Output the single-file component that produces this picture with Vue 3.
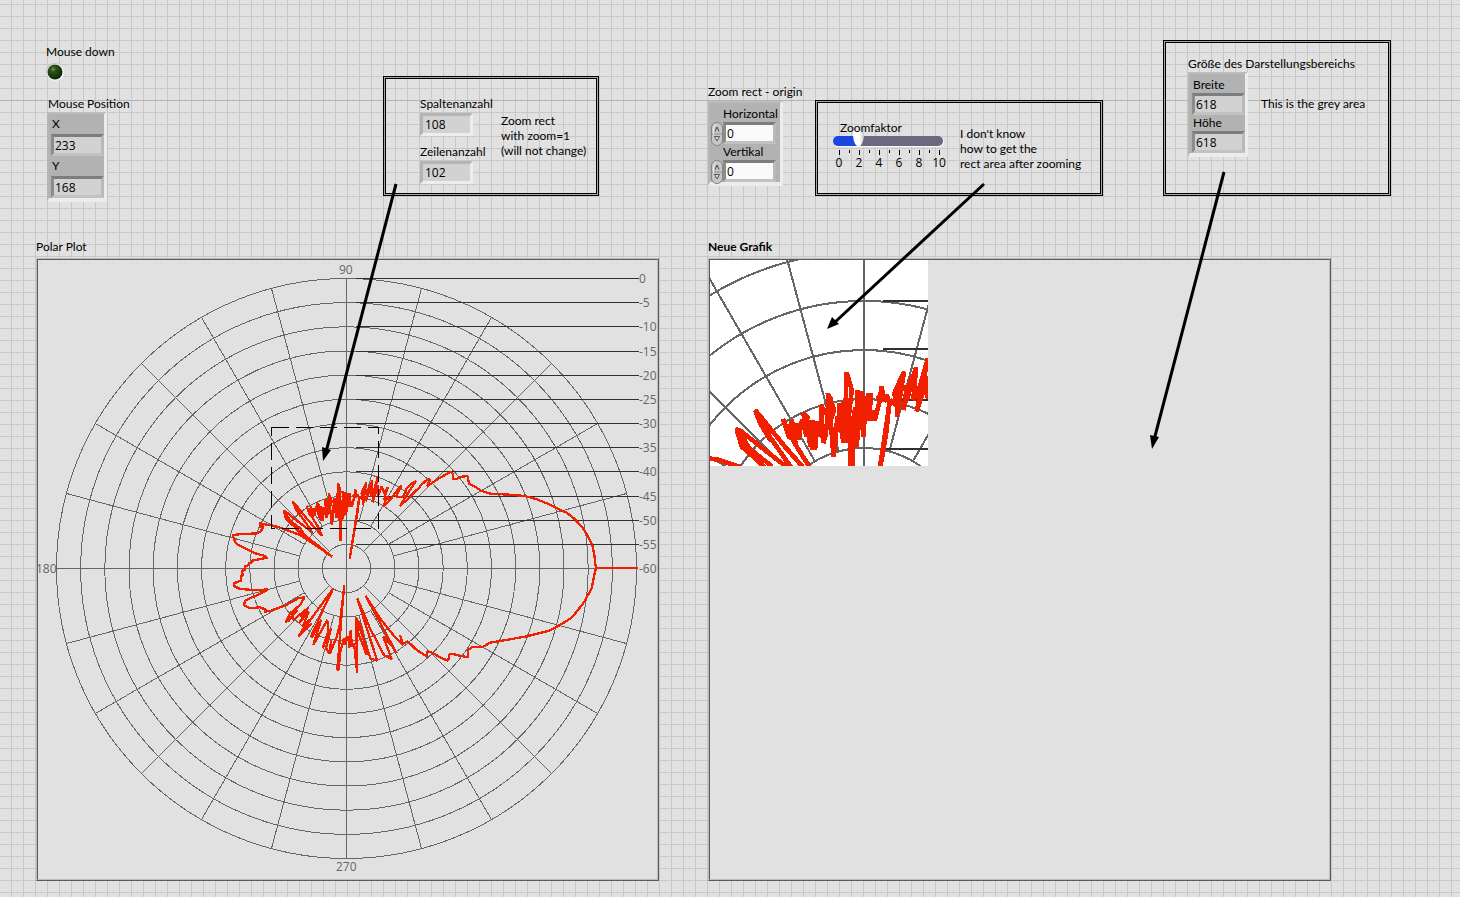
<script setup>
const CX = 346.5
const CY = 568.5
const RADIUS = 290
const rings = Array.from({ length: 12 }, (_, i) => (RADIUS * (i + 1)) / 12)
const levels = Array.from({ length: 13 }, (_, i) => ({
  label: i === 0 ? '0' : String(-5 * i),
  y: Math.round(CY - 0.5 - RADIUS + (RADIUS * i) / 12) + 0.5
}))
const spokes = Array.from({ length: 24 }, (_, i) => i)
  .filter((i) => i % 6 !== 0)
  .map((i) => {
    const a = (i * Math.PI) / 12
    const inner = i % 3 === 0 ? RADIUS / 12 : RADIUS / 6
    return {
      x1: CX + inner * Math.cos(a),
      y1: CY - inner * Math.sin(a),
      x2: CX + RADIUS * Math.cos(a),
      y2: CY - RADIUS * Math.sin(a)
    }
  })

// Measured lobe, stored in sections that each have their own origin and resolution.
const sections = [
  { x: 400, y: 450, k: 3, p: '714 354 588 354 586 340 583 315 577 285 562 255 545 230 525 208 500 188 475 177 440 160 410 148 375 138 330 134 272 131 243 122 222 108 207 102 203 78 185 80 170 86 158 86 158 70 152 66 140 72 115 86 92 102 82 108 90 86 78 92 60 108' },
  { x: 220, y: 410, k: 3, p: '600 230 580 250 560 270 540 288 560 255 588 213 572 222 560 235 548 262 528 260 545 226 532 240 512 268 490 290 500 262 515 265 492 270 503 232 492 250 485 228 478 250' },
  { x: 265.77, y: 412.72, k: 6.09, p: '684 505 676 480 684 440 650 545 684 385 660 470 640 510 648 412 618 515 645 430 622 505 635 440 610 540 622 470 600 480 590 560 612 425 605 440 583 490 592 530 570 510 566 540 541 705 511 889 560 600 568 520 560 495 550 515 545 468 538 515 550 490 532 505 540 510 524 572 520 540 514 572 518 545 509 572 512 490 506 572 504 490 500 570 496 500 496 530 490 620 488 500 483 485 480 600 478 540 472 480 474 630 466 530 470 650 462 540 458 705 456 783 446 560 455 480 440 427 437 520 433 640 440 520 438 638 444 530 427 520 430 638 424 600 422 530 418 520 416 600 412 560 406 640 400 680 392 570 403 540 383 490 388 590 392 500 374 630 384 560 362 525 370 640 376 590 358 620 352 575 345 660 342 580 338 660 338 570 332 650 330 570 328 640 325 590 316 600 310 550 322 560 318 615 320 620 306 570 300 595 296 630 288 580 283 595 286 620 275 570 270 610 288 640 262 585 282 615 268 625 248 567 262 600 290 650 325 705 342 750 255 650 165 540 180 580 212 632 202 600 185 585 230 650 268 705 284 730 200 665 115 598 140 650 210 705 258 775 170 690 125 650 110 600' },
  { x: 220, y: 410, k: 3, p: '193 302 215 340 240 370 262 388 240 362 270 388 337 440 240 375 200 360 165 348 140 344 118 340 130 345 118 348 130 352 122 364 110 370 60 373 38 375 47 400 80 418 105 430 128 436 142 443 118 448 98 451 96 458 88 458 85 466 76 468 75 480 66 482 68 496 62 500 64 512' },
  { x: 220, y: 560, k: 3, p: '62 62 42 70 42 78 60 87 110 91 145 88 110 106 75 122 72 136 90 145 120 142 140 150 132 156 152 152 195 137 235 115 254 112 240 135 210 160 197 188 232 150 205 184 220 160 220 180 267 142 240 170 262 150 237 190 266 155 248 200 268 178 235 230 275 190 235 230 340 85 318 130 272 232 304 180 276 232 300 190 280 255 322 180 325 215 308 265 333 205 318 265 328 280 334 240 330 280 350 230 360 190 373 75 366 150 352 330 356 330 360 280 372 235 376 255 378 232 385 232 388 265 386 240 390 262 392 210 396 260 402 250 412 340 408 170 415 220 440 285 422 195 408 175 452 296 472 302 450 235 412 115 450 205 492 285 515 298 490 230 520 262 530 280 500 225 437 108 480 175 520 225 550 255 540 225 548 252 562 245 600 278' },
  { x: 400, y: 450, k: 3, p: '20 572 50 600 82 620 82 603 100 610 125 625 145 632 148 612 160 612 182 618 205 622 205 600 215 592 250 590 270 578 300 573 375 560 445 543 480 525 515 503 550 460 575 415 583 375 588 354' }
]
const trace = sections
  .map(({ x, y, k, p }) => {
    const n = p.split(' ').map(Number)
    const out = []
    for (let i = 0; i < n.length; i += 2) {
      out.push((x + n[i] / k).toFixed(1) + ',' + (y + n[i + 1] / k).toFixed(1))
    }
    return out.join(' ')
  })
  .join(' ')

const ticks = Array.from({ length: 11 }, (_, i) => i)
</script>

<template>
  <main class="front-panel">
    <header class="controls">
      <section class="mouse">
        <div class="caption">Mouse down</div>
        <svg class="led" width="18" height="18" viewBox="1 1 18 18" role="img" aria-label="Mouse down">
          <defs>
            <radialGradient id="led" cx=".38" cy=".32" r=".7">
              <stop offset="0" stop-color="#6d9a5c" />
              <stop offset=".25" stop-color="#2c5516" />
              <stop offset="1" stop-color="#0c2404" />
            </radialGradient>
          </defs>
          <circle cx="9.5" cy="9.5" r="8.5" fill="#c4c4c4" />
          <circle cx="10.5" cy="10.5" r="8.5" fill="#f6f6f6" />
          <circle cx="10" cy="10" r="7.5" fill="url(#led)" />
        </svg>
        <div class="caption mouse-title">Mouse Position</div>
        <div class="cluster tall">
          <label for="mx">X</label>
          <input id="mx" class="num" value="233" readonly />
          <label for="my">Y</label>
          <input id="my" class="num" value="168" readonly />
        </div>
      </section>

      <section class="frame rect-frame">
        <div>
          <label class="caption" for="cols">Spaltenanzahl</label>
          <input id="cols" class="num loose" value="108" readonly />
          <label class="caption" for="rows">Zeilenanzahl</label>
          <input id="rows" class="num loose" value="102" readonly />
        </div>
        <p class="note">Zoom rect<br />with zoom=1<br />(will not change)</p>
      </section>

      <section class="origin">
        <div class="caption">Zoom rect - origin</div>
        <div class="cluster spin">
          <label for="h">Horizontal</label>
          <div class="spin-row">
            <button class="spinner" aria-label="Horizontal">
              <svg width="12" height="24" viewBox="0 0 12 24">
                <rect x=".5" y=".5" width="11" height="23" rx="5.5" fill="#c6c6c6" stroke="#858585" />
                <path d="M1 12h10" stroke="#8f8f8f" />
                <path d="M2.500 13V7Q2.500 3 5 2" fill="none" stroke="#eee" />
                <path d="M4 9.500L6 5L8 9.500" fill="none" stroke="#444" />
                <path d="M3.500 14.500H8.500L6 19Z" fill="#ddd" stroke="#555" />
              </svg>
            </button>
            <input id="h" class="num white" value="0" />
          </div>
          <label for="v">Vertikal</label>
          <div class="spin-row">
            <button class="spinner" aria-label="Vertikal">
              <svg width="12" height="24" viewBox="0 0 12 24">
                <rect x=".5" y=".5" width="11" height="23" rx="5.5" fill="#c6c6c6" stroke="#858585" />
                <path d="M1 12h10" stroke="#8f8f8f" />
                <path d="M2.500 13V7Q2.500 3 5 2" fill="none" stroke="#eee" />
                <path d="M4 9.500L6 5L8 9.500" fill="none" stroke="#444" />
                <path d="M3.500 14.500H8.500L6 19Z" fill="#ddd" stroke="#555" />
              </svg>
            </button>
            <input id="v" class="num white" value="0" />
          </div>
        </div>
      </section>

      <section class="frame factor-frame">
        <div class="factor">
          <label class="caption" for="zoom">Zoomfaktor</label>
          <input id="zoom" class="slider" type="range" min="0" max="10" value="2" />
          <div class="scale">
            <span v-for="t in ticks" :key="t" :class="{ minor: t % 2 }"><i></i><b v-if="t % 2 === 0">{{ t }}</b></span>
          </div>
        </div>
        <p class="note">I don't know<br />how to get the<br />rect area after zooming</p>
      </section>

      <section class="frame size-frame">
        <div>
          <div class="caption">Größe des Darstellungsbereichs</div>
          <div class="size-row">
            <div class="cluster size">
              <label for="w">Breite</label>
              <input id="w" class="num" value="618" readonly />
              <label for="ht">Höhe</label>
              <input id="ht" class="num" value="618" readonly />
            </div>
            <p class="note">This is the grey area</p>
          </div>
        </div>
      </section>
    </header>

    <div class="plots">
      <section>
        <h2 class="caption">Polar Plot</h2>
        <div class="screen">
          <svg viewBox="38 260 619 619">
            <defs>
              <g id="polar" fill="none">
                <g stroke="#666" stroke-width="1" shape-rendering="crispEdges">
                  <circle v-for="r in rings" :key="r" :cx="CX" :cy="CY" :r="r" />
                  <line v-for="(s, i) in spokes" :key="i" v-bind="s" />
                  <path d="M56 568.5H637M346.5 278V859" />
                </g>
                <path v-for="l in levels.slice(0, 12)" :key="l.y" :d="`M356 ${l.y}H639`" stroke="#303030" shape-rendering="crispEdges" />
                <polyline :points="trace" stroke="#f02000" stroke-width="2.3" stroke-linejoin="bevel" shape-rendering="crispEdges" />
              </g>
            </defs>
            <use href="#polar" />
            <g class="scale-text">
              <text v-for="l in levels" :key="l.y" x="639" :y="l.y + 4">{{ l.label }}</text>
              <text x="339" y="274">90</text>
              <text x="36" y="573">180</text>
              <text x="336" y="871">270</text>
            </g>
            <rect x="271.5" y="427.5" width="107" height="101" fill="none" stroke="#000" stroke-dasharray="17 7" shape-rendering="crispEdges" />
          </svg>
        </div>
      </section>
      <section>
        <h2 class="caption strong">Neue Grafik</h2>
        <div class="screen">
          <svg viewBox="710 260 619 619">
            <rect x="710" y="260" width="218" height="206" fill="#fff" />
            <svg x="710" y="260" width="218" height="206" viewBox="270.6 427.5 107.5 101.5" preserveAspectRatio="none">
              <use href="#polar" />
            </svg>
          </svg>
        </div>
      </section>
    </div>

    <svg class="arrows" viewBox="0 0 1460 897" aria-hidden="true">
      <g stroke="#000" stroke-width="3" fill="none">
        <path d="M396 184L326 452" />
        <path d="M984 184L834 323" />
        <path d="M1224 172L1154 440" />
      </g>
      <path d="M323 461L322 447L331 450Z" />
      <path d="M827 329L832 317L839 324Z" />
      <path d="M1152 449L1150 435L1159 437Z" />
    </svg>
  </main>
</template>

<style>
body {
  margin: 0;
  background: #e1e1e1;
}
</style>

<style scoped>
* {
  box-sizing: border-box;
}
.front-panel {
  position: relative;
  padding: 40px 69px 16px 36px;
  font: 12px/15px Lato, "Open Sans", "Noto Sans", sans-serif;
  color: #000;
  background:
    linear-gradient(#b4b4b4, #b4b4b4) 0 100px / 100% 1px no-repeat,
    linear-gradient(90deg, #c8c8c8 1px, transparent 1px) 11px 0 / 12px 12px,
    linear-gradient(#c8c8c8 1px, #e1e1e1 1px) 0 4px / 12px 12px;
}
.controls {
  display: flex;
  align-items: flex-start;
  height: 199px;
}
.caption {
  display: block;
  margin: 0;
  font-size: 12px;
  font-weight: 400;
  line-height: 16px;
  white-space: nowrap;
}
.strong {
  font-weight: 700;
}
.mouse {
  width: 347px;
  padding: 4px 0 0 10px;
}
.led {
  display: block;
  margin-top: 3px;
}
.mouse-title {
  margin: 15px 0 0 2px;
}
.cluster {
  display: flex;
  flex-direction: column;
  width: 60px;
  padding: 0 2px 0 2px;
  background: #b2b2b2;
  border: solid;
  border-width: 2px 3px 4px 2px;
  border-color: #bcbcbc #ececec #ececec #b6b6b6;
}
.cluster label {
  height: 16px;
  padding-left: 1px;
  line-height: 16px;
}
.mouse .cluster {
  margin-left: 1px;
}
.tall label {
  height: 20px;
  line-height: 20px;
}
.size {
  padding-top: 3px;
}
.num {
  display: block;
  width: 53px;
  height: 22px;
  padding: 0 0 0 1px;
  font: 12px/16px "Open Sans", "Noto Sans", sans-serif;
  color: #000;
  background: #d2d2d2;
  border: 3px solid;
  border-color: #7d7d7d #b9b9b9 #c2c2c2 #8c8c8c;
  border-radius: 0;
  outline: none;
}
.loose {
  height: 23px;
  padding-left: 2px;
  border-color: #b6b6b6 #ededed #ededed #b4b4b4;
}
.frame {
  display: flex;
  border: 1px solid #000;
  box-shadow: inset 0 0 0 1px #a8a8a8, inset 0 0 0 2px #000;
}
.rect-frame {
  width: 216px;
  height: 120px;
  margin-top: 36px;
  padding: 19px 0 0 36px;
}
.rect-frame > div {
  width: 81px;
}
.rect-frame .caption + .num {
  margin: 1px 0 8px;
}
.note {
  margin: 0;
  white-space: nowrap;
}
.rect-frame .note {
  padding-top: 17px;
}
.origin {
  width: 107px;
  margin: 44px 0 0 109px;
}
.spin {
  width: 75px;
  margin-top: 1px;
  padding: 3px 2px 0 1px;
}
.spin label {
  padding-left: 12px;
}
.spin-row {
  display: flex;
}
.spinner {
  width: 12px;
  height: 22px;
  padding: 0;
  background: none;
  border: 0;
}
.spinner svg {
  display: block;
}
.white {
  background: #fafafa;
}
.factor-frame {
  width: 288px;
  height: 96px;
  margin-top: 60px;
  padding: 19px 0 0 17px;
}
.factor {
  width: 127px;
}
.factor .caption {
  position: relative;
  z-index: 1;
  padding-left: 7px;
}
.slider {
  display: block;
  width: 110px;
  height: 10px;
  margin: 0;
  appearance: none;
  background: linear-gradient(90deg, #1b46e2 25px, #6b6880 25px);
  border-radius: 5px;
  box-shadow: 1px 1px 0 #f6f6f6;
}
.slider::-webkit-slider-thumb {
  appearance: none;
  width: 11px;
  height: 16px;
  margin-top: -6px;
  background: linear-gradient(90deg, #fff 60%, #c8c8c8);
  border-radius: 3px 3px 5px 5px / 3px 3px 12px 12px;
}
.scale {
  display: flex;
  width: 111px;
  padding: 4px 0 0 1px;
  font-family: "Open Sans", "Noto Sans", sans-serif;
}
.scale span {
  display: flex;
  flex: 1 1 0;
  flex-direction: column;
  align-items: center;
  min-width: 0;
}
.scale i {
  width: 1px;
  height: 5px;
  background: #000;
}
.scale .minor i {
  height: 3px;
}
.scale b {
  font-weight: 400;
}
.factor-frame .note {
  padding-top: 6px;
}
.size-frame {
  width: 228px;
  height: 156px;
  margin-left: 60px;
  padding: 15px 0 0 24px;
}
.size-row {
  display: flex;
}
.size-row .note {
  padding: 24px 0 0 13px;
}
.plots {
  display: grid;
  grid-template-columns: 1fr 1fr;
  gap: 49px;
  margin-right: 60px;
}
.screen {
  margin-top: 3px;
  background: #e1e1e1;
  border: solid;
  border-width: 1px;
  border-color: #bdbdbd #5a5a5a #5a5a5a #bdbdbd;
}
.screen > svg {
  display: block;
  width: 100%;
  border: solid;
  border-width: 1px;
  border-color: #5a5a5a #bdbdbd #bdbdbd #5a5a5a;
}
.scale-text {
  font-family: "Open Sans", "Noto Sans", sans-serif;
  font-size: 12px;
  fill: #666;
}
.arrows {
  position: absolute;
  top: 0;
  left: 0;
  width: 100%;
  pointer-events: none;
}
</style>
